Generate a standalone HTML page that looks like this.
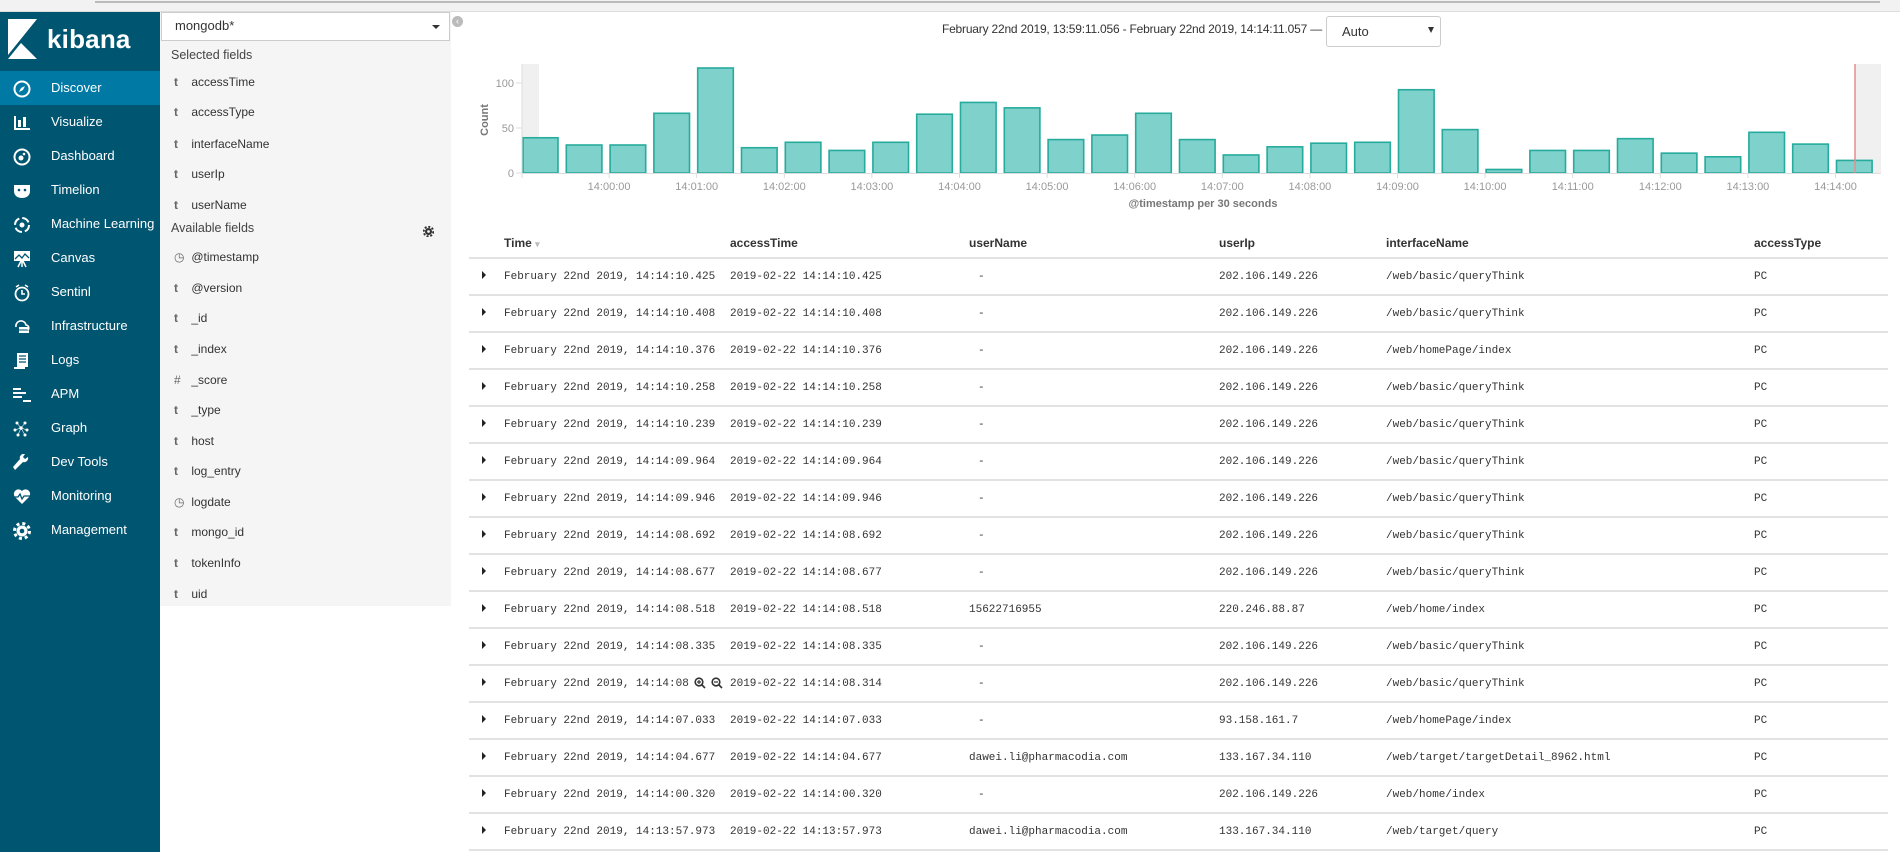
<!DOCTYPE html>
<html><head><meta charset="utf-8"><style>
*{margin:0;padding:0;box-sizing:border-box}
body{width:1900px;height:852px;overflow:hidden;background:#fff;font-family:"Liberation Sans",sans-serif;position:relative;color:#333}
.a{position:absolute;white-space:nowrap}
#top{left:0;top:0;width:1900px;height:12px;background:#f2f2f2;border-bottom:1px solid #ddd}
#top:before{content:"";position:absolute;left:95px;right:20px;top:1px;height:2px;background:#bbb}
#side{left:0;top:12px;width:160px;height:840px;background:#005571}
.nav{position:absolute;left:0;width:160px;height:34px;color:#fff;font-size:13px;line-height:34px}
.nav span{position:absolute;left:51px}
.nav svg{position:absolute;left:13px;top:9px}
#fp{left:160px;top:12px;width:291px;height:594px;background:#f5f5f5}
.fld{position:absolute;left:174px;font-size:12px;color:#333;line-height:16px}
.fld b{display:inline-block;width:14px;color:#666;font-weight:bold}
.hdr{position:absolute;left:171px;font-size:12.5px;color:#444}
.th{position:absolute;top:236px;font-size:12px;font-weight:bold;color:#333}
.row{position:absolute;left:469px;width:1419px;height:37px;border-bottom:2px solid #e2e2e2;font-family:"Liberation Mono",monospace;font-size:11px;color:#333}
.row span{position:absolute;top:12px}
.row i{position:absolute;left:13px;top:12px;width:0;height:0;border-top:4px solid transparent;border-bottom:4px solid transparent;border-left:4px solid #222}
</style></head><body>
<div id="top" class="a"></div>
<div id="side" class="a">
 <svg class="a" style="left:8px;top:7px" width="30" height="40" viewBox="0 0 30 40"><polygon points="0,0 29,0 0,36" fill="#fff"/><polygon points="0,40 13,24 29,40" fill="#fff"/></svg>
 <div class="a" style="left:47px;top:12px;font-size:26px;color:#fff;font-weight:bold;letter-spacing:0.2px">kibana</div>
</div>
<div class="nav" style="top:71px;background:#0079a5"><svg width="18" height="18"><circle cx="9" cy="9" r="7.5" fill="none" stroke="#fff" stroke-width="2"/><polygon points="12,6 10,10 6,12 8,8" fill="#fff"/></svg><span>Discover</span></div>
<div class="nav" style="top:105px"><svg width="18" height="18"><rect x="1" y="2" width="2" height="14" fill="#fff"/><rect x="1" y="14" width="16" height="2" fill="#fff"/><rect x="5" y="6" width="3" height="7" fill="#fff"/><rect x="10" y="3" width="3" height="10" fill="#fff"/></svg><span>Visualize</span></div>
<div class="nav" style="top:139px"><svg width="18" height="18"><circle cx="9" cy="9" r="7.5" fill="none" stroke="#fff" stroke-width="2"/><circle cx="8" cy="10" r="2.5" fill="#fff"/><circle cx="11" cy="6" r="1.3" fill="#fff"/></svg><span>Dashboard</span></div>
<div class="nav" style="top:173px"><svg width="18" height="18"><path d="M1 3h16v6c0 5-4 7-8 7s-8-2-8-7z" fill="#fff"/><circle cx="6" cy="8" r="1.3" fill="#005571"/><circle cx="12" cy="8" r="1.3" fill="#005571"/></svg><span>Timelion</span></div>
<div class="nav" style="top:207px"><svg width="18" height="18"><circle cx="9" cy="9" r="7" fill="none" stroke="#fff" stroke-width="2" stroke-dasharray="8 3"/><circle cx="9" cy="9" r="2.5" fill="#fff"/></svg><span>Machine Learning</span></div>
<div class="nav" style="top:241px"><svg width="18" height="18"><rect x="1" y="1" width="16" height="10" fill="#fff"/><path d="M2 9l4-4 3 3 3-4 4 4" stroke="#005571" fill="none" stroke-width="1.3"/><path d="M5 17l3-6M13 17l-3-6M9 11v6" stroke="#fff" stroke-width="1.5"/></svg><span>Canvas</span></div>
<div class="nav" style="top:275px"><svg width="18" height="18"><circle cx="9" cy="10" r="6.5" fill="none" stroke="#fff" stroke-width="1.8"/><path d="M9 6v4h3M3 3l3-2M15 3l-3-2" stroke="#fff" stroke-width="1.6" fill="none"/></svg><span>Sentinl</span></div>
<div class="nav" style="top:309px"><svg width="18" height="18"><path d="M3 9a5 5 0 0 1 10-2a3 3 0 0 1 2 5" stroke="#fff" stroke-width="1.6" fill="none"/><rect x="6" y="9" width="10" height="2.5" fill="#fff"/><rect x="6" y="12.5" width="10" height="2.5" fill="#fff"/></svg><span>Infrastructure</span></div>
<div class="nav" style="top:343px"><svg width="18" height="18"><rect x="4" y="1" width="11" height="14" fill="#fff"/><path d="M6 4h7M6 7h7M6 10h7" stroke="#005571" stroke-width="1.2"/><rect x="1" y="15" width="11" height="2" fill="#fff"/></svg><span>Logs</span></div>
<div class="nav" style="top:377px"><svg width="18" height="18"><rect x="0" y="2" width="8" height="2" fill="#fff"/><rect x="0" y="6" width="13" height="2" fill="#fff"/><rect x="0" y="10" width="9" height="2" fill="#fff"/><rect x="10" y="14" width="8" height="2" fill="#fff"/></svg><span>APM</span></div>
<div class="nav" style="top:411px"><svg width="18" height="18"><g fill="#fff"><circle cx="4" cy="3" r="1.5"/><circle cx="12" cy="3" r="1.5"/><circle cx="8" cy="8" r="1.7"/><circle cx="2" cy="10" r="1.5"/><circle cx="14" cy="10" r="1.5"/><circle cx="5" cy="15" r="1.5"/><circle cx="12" cy="15" r="1.5"/></g><path d="M4 3l4 5 4-5M2 10l6-2 6 2M5 15l3-7 4 7" stroke="#fff" stroke-width=".6" fill="none"/></svg><span>Graph</span></div>
<div class="nav" style="top:445px"><svg width="18" height="18"><path d="M2 16l8-8a4 4 0 0 0 5-5l-3 2-2-2 2-3a4 4 0 0 0-5 5l-7 8z" fill="#fff"/></svg><span>Dev Tools</span></div>
<div class="nav" style="top:479px"><svg width="18" height="18"><path d="M9 16L2 9a4 4 0 0 1 7-6a4 4 0 0 1 7 6z" fill="#fff"/><path d="M1 9h4l2-3 2 5 2-3h6" stroke="#005571" stroke-width="1.3" fill="none"/></svg><span>Monitoring</span></div>
<div class="nav" style="top:513px"><svg width="18" height="18"><circle cx="9" cy="9" r="5.5" fill="#fff"/><circle cx="9" cy="9" r="7.5" fill="none" stroke="#fff" stroke-width="3" stroke-dasharray="3 2.9"/><circle cx="9" cy="9" r="2.3" fill="#005571"/></svg><span>Management</span></div>

<div id="fp" class="a"></div>
<div class="a" style="left:161px;top:12px;width:289px;height:29px;background:#fff;border:1px solid #ccc"></div>
<div class="a" style="left:175px;top:18px;font-size:13px;color:#333">mongodb*</div>
<div class="a" style="left:432px;top:25px;border-left:4px solid transparent;border-right:4px solid transparent;border-top:4px solid #333"></div>
<div class="a" style="left:452px;top:16px;width:11px;height:11px;border-radius:50%;background:#bbb;color:#fff;font-size:9px;line-height:11px;text-align:center">&#8249;</div>
<div class="hdr" style="top:48px">Selected fields</div>
<div class="fld" style="top:74px"><b>t</b> accessTime</div>
<div class="fld" style="top:104px"><b>t</b> accessType</div>
<div class="fld" style="top:136px"><b>t</b> interfaceName</div>
<div class="fld" style="top:166px"><b>t</b> userIp</div>
<div class="fld" style="top:197px"><b>t</b> userName</div>
<div class="hdr" style="top:221px">Available fields</div>
<svg class="a" style="left:423px;top:226px" width="11" height="11"><circle cx="5.5" cy="5.5" r="3.5" fill="#333"/><circle cx="5.5" cy="5.5" r="4.8" fill="none" stroke="#333" stroke-width="2" stroke-dasharray="2 1.7"/><circle cx="5.5" cy="5.5" r="1.4" fill="#f5f5f5"/></svg>
<div class="fld" style="top:249px"><b style="font-weight:normal">&#9719;</b> @timestamp</div>
<div class="fld" style="top:280px"><b>t</b> @version</div>
<div class="fld" style="top:310px"><b>t</b> _id</div>
<div class="fld" style="top:341px"><b>t</b> _index</div>
<div class="fld" style="top:372px"><b style="font-weight:normal">#</b> _score</div>
<div class="fld" style="top:402px"><b>t</b> _type</div>
<div class="fld" style="top:433px"><b>t</b> host</div>
<div class="fld" style="top:463px"><b>t</b> log_entry</div>
<div class="fld" style="top:494px"><b style="font-weight:normal">&#9719;</b> logdate</div>
<div class="fld" style="top:524px"><b>t</b> mongo_id</div>
<div class="fld" style="top:555px"><b>t</b> tokenInfo</div>
<div class="fld" style="top:586px"><b>t</b> uid</div>

<div class="a" style="left:900px;width:422px;top:22px;font-size:12px;text-align:right;color:#333;letter-spacing:-0.2px">February 22nd 2019, 13:59:11.056 - February 22nd 2019, 14:14:11.057 —</div>
<div class="a" style="left:1326px;top:16px;width:115px;height:31px;border:1px solid #ccc;border-radius:3px;background:#fff"></div>
<div class="a" style="left:1342px;top:24px;font-size:13px;color:#333">Auto</div>
<div class="a" style="left:1428px;top:27px;border-left:3.5px solid transparent;border-right:3.5px solid transparent;border-top:6px solid #333"></div>

<svg class="a" style="left:0;top:0" width="1900" height="220" font-family="Liberation Sans,sans-serif">
<rect x="522" y="64" width="17" height="109" fill="#f0f0f0"/>
<rect x="1855" y="64" width="26" height="109" fill="#f0f0f0"/>
<g id="bars"></g>
<line x1="522" y1="64" x2="522" y2="178" stroke="#ddd"/>
<line x1="522" y1="173.5" x2="1881" y2="173.5" stroke="#ddd"/>
<line x1="1855" y1="64" x2="1855" y2="173" stroke="#e48e8e" stroke-width="1.5"/>
<g font-size="11" fill="#999" text-anchor="end"><text x="514" y="87">100</text><text x="514" y="132">50</text><text x="514" y="177">0</text></g>
<g stroke="#ddd"><line x1="516" y1="83" x2="522" y2="83"/><line x1="516" y1="128" x2="522" y2="128"/><line x1="516" y1="173" x2="522" y2="173"/></g>
<text transform="translate(488,120) rotate(-90)" font-size="11" font-weight="bold" fill="#777" text-anchor="middle">Count</text>
<g id="xl" font-size="11" fill="#999" text-anchor="middle"></g>
<text x="1203" y="207" font-size="11" font-weight="bold" fill="#777" text-anchor="middle">@timestamp per 30 seconds</text>
</svg>
<script>
var h=[40,32,32,67,117,29,35,26,35,66,79,73,38,43,67,38,21,30,34,35,93,49,5,26,26,39,23,19,46,33,15];
var g=document.getElementById('bars'),s='';
for(var i=0;i<h.length;i++){var x=521.5+43.8*i,w=37.6;if(i==0){x=522;w=37}var hh=h[i]*0.906;s+='<rect x="'+(x+1)+'" y="'+(173-hh+1)+'" width="'+(w-2)+'" height="'+(hh-1)+'" fill="#7fd1cb" stroke="#26ab9c" stroke-width="1.6"/>';}
g.innerHTML=s;
var xl=document.getElementById('xl'),t='';
for(var k=0;k<15;k++){var xx=609.1+87.6*k;var mm=(k<10?'0':'')+k;t+='<text x="'+xx+'" y="190">14:'+mm+':00</text><line x1="'+xx+'" y1="173" x2="'+xx+'" y2="178" stroke="#ddd"/>';}
xl.innerHTML=t;
</script>

<div class="th" style="left:504px">Time <span style="color:#bbb;font-size:9px">&#9662;</span></div>
<div class="th" style="left:730px">accessTime</div>
<div class="th" style="left:969px">userName</div>
<div class="th" style="left:1219px">userIp</div>
<div class="th" style="left:1386px">interfaceName</div>
<div class="th" style="left:1754px">accessType</div>
<div class="a" style="left:469px;top:257px;width:1419px;height:2px;background:#e2e2e2"></div>
<div id="rows"></div>
<script>
var R=[
["February 22nd 2019, 14:14:10.425","2019-02-22 14:14:10.425","-","202.106.149.226","/web/basic/queryThink"],
["February 22nd 2019, 14:14:10.408","2019-02-22 14:14:10.408","-","202.106.149.226","/web/basic/queryThink"],
["February 22nd 2019, 14:14:10.376","2019-02-22 14:14:10.376","-","202.106.149.226","/web/homePage/index"],
["February 22nd 2019, 14:14:10.258","2019-02-22 14:14:10.258","-","202.106.149.226","/web/basic/queryThink"],
["February 22nd 2019, 14:14:10.239","2019-02-22 14:14:10.239","-","202.106.149.226","/web/basic/queryThink"],
["February 22nd 2019, 14:14:09.964","2019-02-22 14:14:09.964","-","202.106.149.226","/web/basic/queryThink"],
["February 22nd 2019, 14:14:09.946","2019-02-22 14:14:09.946","-","202.106.149.226","/web/basic/queryThink"],
["February 22nd 2019, 14:14:08.692","2019-02-22 14:14:08.692","-","202.106.149.226","/web/basic/queryThink"],
["February 22nd 2019, 14:14:08.677","2019-02-22 14:14:08.677","-","202.106.149.226","/web/basic/queryThink"],
["February 22nd 2019, 14:14:08.518","2019-02-22 14:14:08.518","15622716955","220.246.88.87","/web/home/index"],
["February 22nd 2019, 14:14:08.335","2019-02-22 14:14:08.335","-","202.106.149.226","/web/basic/queryThink"],
["February 22nd 2019, 14:14:08","2019-02-22 14:14:08.314","-","202.106.149.226","/web/basic/queryThink"],
["February 22nd 2019, 14:14:07.033","2019-02-22 14:14:07.033","-","93.158.161.7","/web/homePage/index"],
["February 22nd 2019, 14:14:04.677","2019-02-22 14:14:04.677","dawei.li@pharmacodia.com","133.167.34.110","/web/target/targetDetail_8962.html"],
["February 22nd 2019, 14:14:00.320","2019-02-22 14:14:00.320","-","202.106.149.226","/web/home/index"],
["February 22nd 2019, 14:13:57.973","2019-02-22 14:13:57.973","dawei.li@pharmacodia.com","133.167.34.110","/web/target/query"]];
var o='';
for(var i=0;i<R.length;i++){var r=R[i];var un=r[2]=='-'?'<span style="left:509px">-</span>':'<span style="left:500px">'+r[2]+'</span>';
var extra=i==11?'<svg style="position:absolute;left:225px;top:11px" width="32" height="13"><g fill="none" stroke="#333" stroke-width="1.6"><circle cx="5" cy="5" r="3.8"/><line x1="8" y1="8" x2="11" y2="11"/><circle cx="22" cy="5" r="3.8"/><line x1="25" y1="8" x2="28" y2="11"/></g><path d="M3 5h4M5 3v4M20 5h4" stroke="#333" stroke-width="1.2"/></svg>':'';
o+='<div class="row" style="top:'+(259+37*i)+'px"><i></i><span style="left:35px">'+r[0]+'</span>'+extra+'<span style="left:261px">'+r[1]+'</span>'+un+'<span style="left:750px">'+r[3]+'</span><span style="left:917px">'+r[4]+'</span><span style="left:1285px">PC</span></div>';}
document.getElementById('rows').innerHTML=o;
</script>
</body></html>
